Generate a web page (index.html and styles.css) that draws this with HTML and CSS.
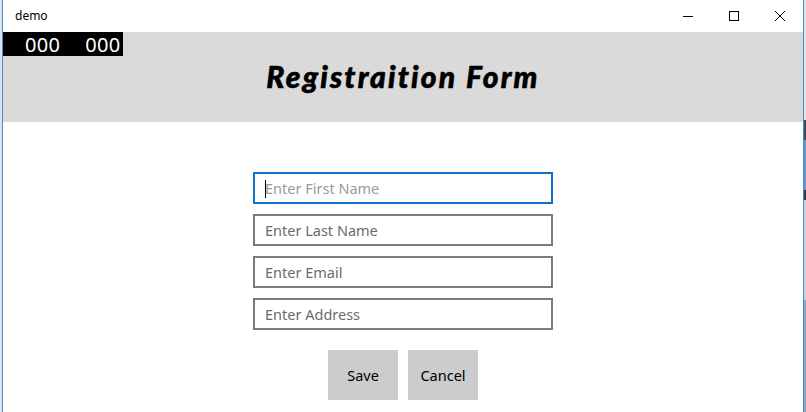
FILE: index.html
```html
<!DOCTYPE html>
<html>
<head>
<meta charset="utf-8">
<link rel="stylesheet" href="styles.css">
</head>
<body>
<div class="desktop">
  <div class="edge-left"></div>
  <div class="window">
    <div class="titlebar">
      <span class="app-name">demo</span>
      <div class="controls">
        <div class="ctl"><svg width="12" height="12" viewBox="0 0 12 12"><path d="M1 6.5H11" stroke="#000" stroke-width="1"/></svg></div>
        <div class="ctl"><svg width="12" height="12" viewBox="0 0 12 12"><rect x="1.5" y="1.5" width="9" height="9" fill="none" stroke="#000" stroke-width="1"/></svg></div>
        <div class="ctl"><svg width="12" height="12" viewBox="0 0 12 12"><path d="M1 1L11 11M11 1L1 11" stroke="#000" stroke-width="1"/></svg></div>
      </div>
    </div>
    <div class="content">
      <div class="header">
        <div class="fps"><span>000</span><span>000</span></div>
        <h1 class="title">Registraition Form</h1>
      </div>
      <div class="form">
        <div class="field focused"><span class="caret"></span><span class="ph light">Enter First Name</span></div>
        <div class="field"><span class="ph">Enter Last Name</span></div>
        <div class="field"><span class="ph">Enter Email</span></div>
        <div class="field"><span class="ph">Enter Address</span></div>
        <div class="buttons">
          <div class="btn">Save</div>
          <div class="btn">Cancel</div>
        </div>
      </div>
    </div>
  </div>
  <div class="edge-right"></div>
</div>
</body>
</html>
```
FILE: styles.css
```css
html, body {
  margin: 0;
  padding: 0;
  width: 806px;
  height: 412px;
  overflow: hidden;
  font-family: "Noto Sans", "Open Sans", "DejaVu Sans", sans-serif;
}
.desktop {
  display: flex;
  width: 806px;
  height: 412px;
  background: #dfe7ef;
}
.edge-left {
  width: 2px;
  background: #dce4ec;
}
.edge-right {
  width: 2px;
  background: linear-gradient(#dfe5ea 0 120px, #3c4a5c 120px 140px, #6a98c0 140px 190px, #2e3c4e 190px 200px, #c8d6e4 200px 300px, #8aa6c4 300px 412px);
}
.window {
  width: 800px;
  border-left: 1px solid #4a8ad4;
  border-right: 1px solid #4a8ad4;
  background: #ffffff;
  display: flex;
  flex-direction: column;
}
.titlebar {
  height: 32px;
  display: flex;
  align-items: center;
  justify-content: space-between;
  background: #ffffff;
}
.app-name {
  font-size: 12px;
  color: #000;
  padding-left: 12px;
  margin-top: -1px;
}
.controls {
  display: flex;
  height: 32px;
}
.ctl {
  width: 46px;
  height: 32px;
  display: flex;
  align-items: center;
  justify-content: center;
}
.ctl svg { display: block; }
.content {
  flex: 1;
  display: flex;
  flex-direction: column;
}
.header {
  position: relative;
  height: 90px;
  background: #dadada;
  display: flex;
  align-items: center;
  justify-content: center;
}
.fps {
  position: absolute;
  left: 0;
  top: 0;
  width: 120px;
  height: 24px;
  background: #000;
  color: #fff;
  display: flex;
  align-items: center;
  gap: 25px;
  padding-left: 22px;
  box-sizing: border-box;
  font-size: 20px;
  font-family: "Noto Sans", "Open Sans", sans-serif;
  letter-spacing: 0.3px;
}
.title {
  margin: 0;
  font-family: Lato, "Noto Sans", sans-serif;
  font-weight: 900;
  font-style: italic;
  font-size: 30px;
  color: #000;
  margin-top: -2px;
  letter-spacing: 2.2px;
  -webkit-text-stroke: 0.6px #000;
}
.form {
  display: flex;
  flex-direction: column;
  align-items: center;
  gap: 10px;
  padding-top: 50px;
}
.field {
  width: 300px;
  height: 32px;
  box-sizing: border-box;
  border: 2px solid #7a7a7a;
  background: #fff;
  display: flex;
  align-items: center;
  padding-left: 10px;
  position: relative;
}
.field.focused {
  border-color: #0f72c8;
}
.caret {
  position: absolute;
  left: 10px;
  top: 6px;
  width: 1px;
  height: 18px;
  background: #000;
}
.ph {
  font-size: 14.5px;
  color: #6b6b6b;
  margin-top: -1px;
}
.ph.light {
  color: #9a9a9a;
}
.buttons {
  display: flex;
  gap: 10px;
  margin-top: 10px;
}
.btn {
  width: 70px;
  height: 50px;
  background: #cccccc;
  display: flex;
  align-items: center;
  justify-content: center;
  font-size: 14.5px;
  color: #000;
}
```
